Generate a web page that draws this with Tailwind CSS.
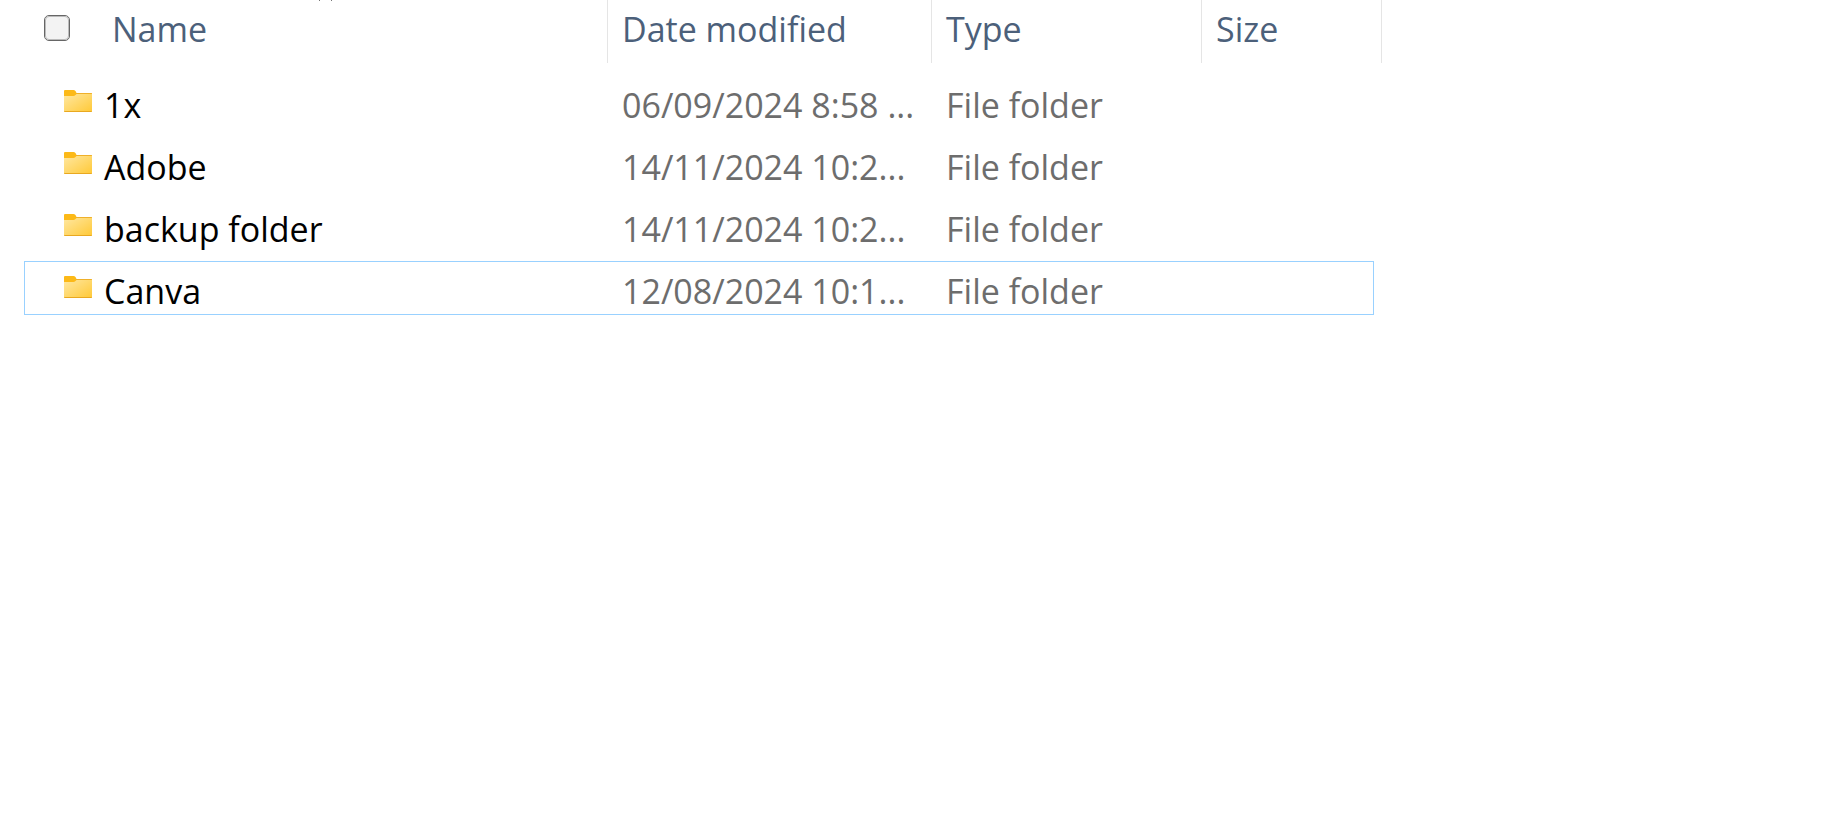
<!DOCTYPE html>
<html lang="en">
<head>
<meta charset="utf-8">
<title>Files</title>
<script src="https://cdn.jsdelivr.net/npm/@tailwindcss/browser@4"></script>
</head>
<body class="bg-white font-['Segoe_UI','Open_Sans','Noto_Sans',sans-serif] text-[34px] leading-[48px] text-[#6d6d6d]">
<svg class="absolute size-0" aria-hidden="true">
  <defs>
    <linearGradient id="front" x1="0" y1="0" x2="1" y2="1">
      <stop offset="0" stop-color="#ffe7a0"/>
      <stop offset="1" stop-color="#ffc937"/>
    </linearGradient>
    <symbol id="folder" viewBox="0 0 28 22">
      <path d="M0 1Q0 0 1 0H9.500Q10.500 0 11.500 1L12.500 3H27Q28 3 28 4V12H0Z" fill="#fcb917"/>
      <path d="M0 6H9.500Q10.500 6 11.500 5L12.500 4H28V21Q28 22 27 22H1Q0 22 0 21Z" fill="url(#front)"/>
      <path d="M0 20.500V21Q0 22 1 22H27Q28 22 28 21V20.500Q28 21 27 21H1Q0 21 0 20.500Z" fill="#e9a820"/>
      <path d="M12.500 3H27Q28 3 28 4H12Z" fill="#efb02a"/>
    </symbol>
  </defs>
</svg>
<main class="relative overflow-x-auto">
  <svg class="absolute left-[318px] top-0 h-[1px] w-[14px]" viewBox="0 0 14 1" aria-hidden="true"><path d="M1 0h1v1H1zM13 0h1v1h-1z" fill="#777"/></svg>
  <table class="w-[1382px] table-fixed border-separate border-spacing-0 text-left whitespace-nowrap">
    <colgroup><col class="w-[608px]"><col class="w-[324px]"><col class="w-[270px]"><col class="w-[180px]"></colgroup>
    <thead class="text-[#4c607a]">
      <tr class="h-[63px]">
        <th class="border-r border-[#e5e5e5] p-0 pb-[5px] font-normal">
          <div class="flex items-center">
            <input type="checkbox" aria-label="Select all" class="mb-0.5 ml-[44px] size-[26px] appearance-none rounded-[5px] border border-[#666] bg-[#f3f3f3] outline-1 -outline-offset-2 outline-[#bbb] checked:bg-[#0067c0]">
            <span class="ml-[42px]">Name</span>
          </div>
        </th>
        <th class="border-r border-[#e5e5e5] p-0 pb-[5px] pl-[14px] font-normal">Date modified</th>
        <th class="border-r border-[#e5e5e5] p-0 pb-[5px] pl-[14px] font-normal">Type</th>
        <th class="border-r border-[#e5e5e5] p-0 pb-[5px] pl-[14px] font-normal">Size</th>
      </tr>
    </thead>
    <tbody>
      <tr aria-hidden="true" class="h-2"><td colspan="4" class="p-0"></td></tr>
      <tr class="h-[62px]">
        <td class="p-0 text-black"><div class="flex items-center pl-16"><svg class="mb-0.5 h-[22px] w-7" aria-hidden="true"><use href="#folder"/></svg><span class="pt-1.5 pl-3">1x</span></div></td>
        <td class="p-0 pt-1.5 pl-[14px]">06/09/2024 8:58 ...</td><td class="p-0 pt-1.5 pl-[14px]">File folder</td><td></td>
      </tr>
      <tr class="h-[62px]">
        <td class="p-0 text-black"><div class="flex items-center pl-16"><svg class="mb-0.5 h-[22px] w-7" aria-hidden="true"><use href="#folder"/></svg><span class="pt-1.5 pl-3">Adobe</span></div></td>
        <td class="p-0 pt-1.5 pl-[14px]">14/11/2024 10:2...</td><td class="p-0 pt-1.5 pl-[14px]">File folder</td><td></td>
      </tr>
      <tr class="h-[62px]">
        <td class="p-0 text-black"><div class="flex items-center pl-16"><svg class="mb-0.5 h-[22px] w-7" aria-hidden="true"><use href="#folder"/></svg><span class="pt-1.5 pl-3">backup folder</span></div></td>
        <td class="p-0 pt-1.5 pl-[14px]">14/11/2024 10:2...</td><td class="p-0 pt-1.5 pl-[14px]">File folder</td><td></td>
      </tr>
      <tr class="relative h-[62px] after:pointer-events-none after:absolute after:top-1 after:right-2 after:bottom-1 after:left-6 after:border after:border-[#99d1ff]">
        <td class="p-0 text-black"><div class="flex items-center pl-16"><svg class="mb-0.5 h-[22px] w-7" aria-hidden="true"><use href="#folder"/></svg><span class="pt-1.5 pl-3">Canva</span></div></td>
        <td class="p-0 pt-1.5 pl-[14px]">12/08/2024 10:1...</td><td class="p-0 pt-1.5 pl-[14px]">File folder</td><td></td>
      </tr>
    </tbody>
  </table>
</main>
</body>
</html>
